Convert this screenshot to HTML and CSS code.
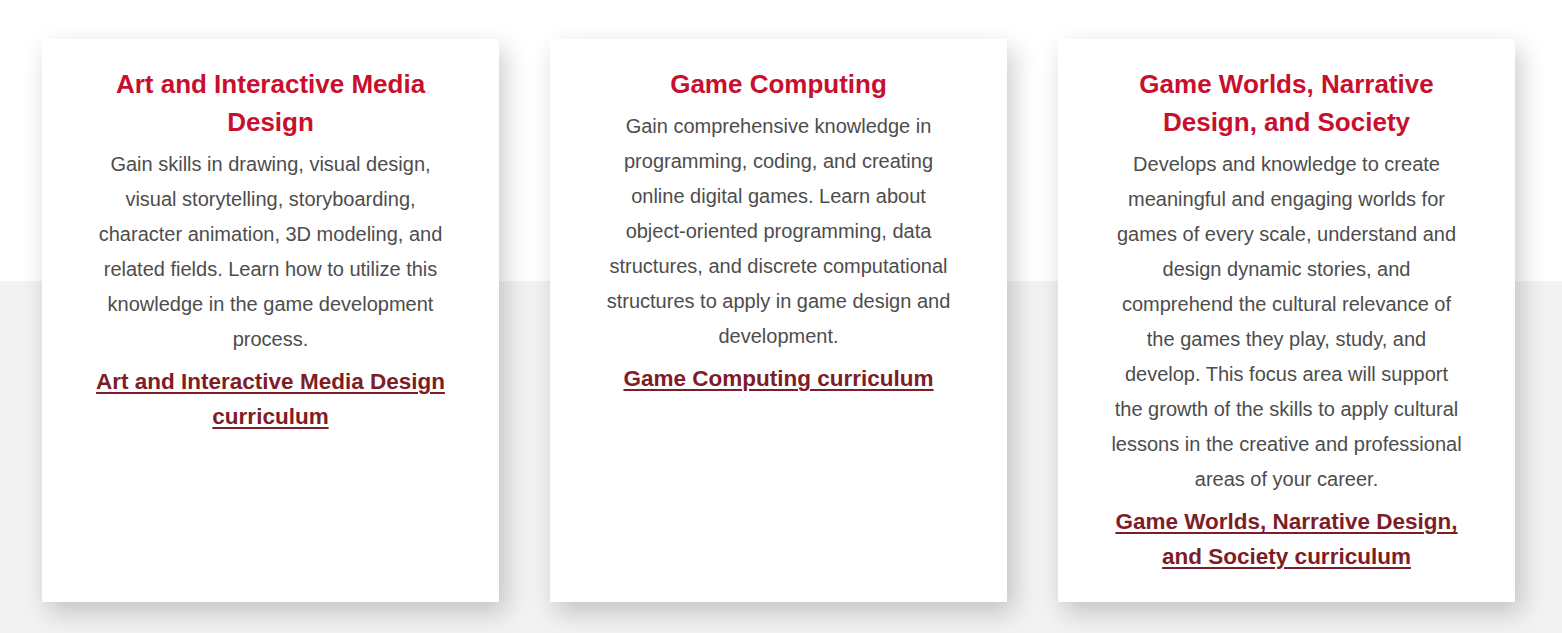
FILE: index.html
```html
<!DOCTYPE html>
<html lang="en">
<head>
<meta charset="utf-8">
<title>Focus Areas</title>
<link rel="stylesheet" href="styles.css">
</head>
<body>
<section class="focus">
  <div class="cards">
    <div class="card">
      <h3 class="card-title">Art and Interactive Media Design</h3>
      <p class="card-text">Gain skills in drawing, visual design, visual storytelling, storyboarding, character animation, 3D modeling, and related fields. Learn how to utilize this knowledge in the game development process.</p>
      <a class="card-link" href="#">Art and Interactive Media Design curriculum</a>
    </div>
    <div class="card">
      <h3 class="card-title">Game Computing</h3>
      <p class="card-text">Gain comprehensive knowledge in programming, coding, and creating online digital games. Learn about object-oriented programming, data structures, and discrete computational structures to apply in game design and development.</p>
      <a class="card-link" href="#">Game Computing curriculum</a>
    </div>
    <div class="card">
      <h3 class="card-title">Game Worlds, Narrative Design, and Society</h3>
      <p class="card-text">Develops and knowledge to create meaningful and engaging worlds for games of every scale, understand and design dynamic stories, and comprehend the cultural relevance of the games they play, study, and develop. This focus area will support the growth of the skills to apply cultural lessons in the creative and professional areas of your career.</p>
      <a class="card-link" href="#">Game Worlds, Narrative Design, and Society curriculum</a>
    </div>
  </div>
</section>
</body>
</html>
```

FILE: styles.css
```css
* { box-sizing: border-box; }
html, body { margin: 0; padding: 0; }
body {
  font-family: "Liberation Sans", Arial, sans-serif;
  background: linear-gradient(to bottom, #ffffff 0, #ffffff 281px, #f2f2f2 281px, #f2f2f2 100%);
  min-height: 633px;
}
.focus {
  padding: 39px 47px 31px 42px;
}
.cards {
  display: grid;
  grid-template-columns: repeat(3, 457px);
  column-gap: 51px;
  align-items: stretch;
}
.card {
  background: #ffffff;
  box-shadow: 6px 10px 24px rgba(0, 0, 0, 0.2);
  padding: 26px 52px 28px;
  text-align: center;
}
.card-title {
  margin: 0;
  color: #c8102e;
  font-size: 26px;
  font-weight: 700;
  line-height: 38px;
}
.card-text {
  margin: 6px 0 7px;
  color: #4d4d4d;
  font-size: 20px;
  line-height: 35px;
}
.card-link {
  display: block;
  color: #7d1d27;
  font-size: 22.5px;
  font-weight: 700;
  line-height: 35px;
  text-decoration: underline;
  text-decoration-thickness: 2px;
  text-underline-offset: 3px;
}
```
